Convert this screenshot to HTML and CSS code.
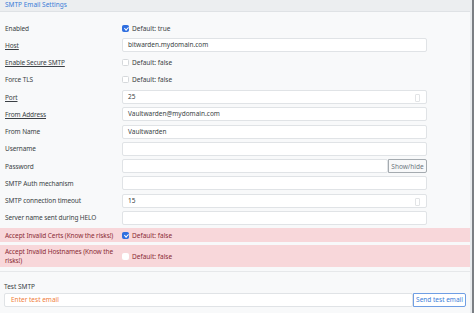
FILE: index.html
```html
<!DOCTYPE html>
<html lang="en">

<head>
    <meta charset="UTF-8">
    <meta name="viewport" content="width=device-width, initial-scale=1.0">
    <title>Vaultwarden Admin</title>
    <link rel="stylesheet" href="styles.css">
</head>

<body>
    <div class="card">
        <div class="card-header">SMTP Email Settings</div>

        <div class="card-body">
            <div class="row">
                <label class="col-label">Enabled</label>
                <div class="col-field check">
                    <span class="box checked"></span><span>Default: true</span>
                </div>
            </div>
            <div class="row">
                <label class="col-label"><abbr>Host</abbr></label>
                <div class="col-field"><div class="input">bitwarden.mydomain.com</div></div>
            </div>
            <div class="row">
                <label class="col-label"><abbr>Enable Secure SMTP</abbr></label>
                <div class="col-field check">
                    <span class="box"></span><span>Default: false</span>
                </div>
            </div>
            <div class="row">
                <label class="col-label">Force TLS</label>
                <div class="col-field check">
                    <span class="box"></span><span>Default: false</span>
                </div>
            </div>
            <div class="row">
                <label class="col-label"><abbr>Port</abbr></label>
                <div class="col-field"><div class="input number">25<span class="spin"></span></div></div>
            </div>
            <div class="row">
                <label class="col-label"><abbr>From Address</abbr></label>
                <div class="col-field"><div class="input">Vaultwarden@mydomain.com</div></div>
            </div>
            <div class="row">
                <label class="col-label">From Name</label>
                <div class="col-field"><div class="input">Vaultwarden</div></div>
            </div>
            <div class="row">
                <label class="col-label">Username</label>
                <div class="col-field"><div class="input"></div></div>
            </div>
            <div class="row">
                <label class="col-label">Password</label>
                <div class="col-field group">
                    <div class="input"></div>
                    <button class="btn-grey">Show/hide</button>
                </div>
            </div>
            <div class="row">
                <label class="col-label">SMTP Auth mechanism</label>
                <div class="col-field"><div class="input"></div></div>
            </div>
            <div class="row">
                <label class="col-label">SMTP connection timeout</label>
                <div class="col-field"><div class="input number">15<span class="spin"></span></div></div>
            </div>
            <div class="row">
                <label class="col-label">Server name sent during HELO</label>
                <div class="col-field"><div class="input"></div></div>
            </div>
            <div class="row danger">
                <label class="col-label">Accept Invalid Certs (Know the risks!)</label>
                <div class="col-field check">
                    <span class="box checked"></span><span>Default: false</span>
                </div>
            </div>
            <div class="row danger tall">
                <label class="col-label">Accept Invalid Hostnames (Know the risks!)</label>
                <div class="col-field check">
                    <span class="box plain"></span><span>Default: false</span>
                </div>
            </div>
        </div>

        <div class="card-footer">
            <div class="test-label">Test SMTP</div>
            <div class="group">
                <div class="input placeholder">Enter test email</div>
                <button class="btn-blue">Send test email</button>
            </div>
        </div>
    </div>
</body>

</html>
```

FILE: styles.css
```css
html, body {
    height: 100%;
}

body {
    margin: 0;
    padding: 0;
    background-color: #fff;
    color: #3a3f44;
    font-family: "Noto Sans", "Open Sans", sans-serif;
    font-size: 6.5px;
    overflow: hidden;
}

.card {
    width: 470px;
    height: 313px;
    background-color: #f8f9fa;
    border-right: 2px solid #e9ecef;
    box-shadow: 2px 0 0 #7b7f84;
}

.card-header {
    height: 11px;
    line-height: 9px;
    padding-left: 5px;
    background-color: #eceef0;
    border-bottom: 1px solid #dfe2e5;
    color: #3b7dd8;
}

.card-body {
    padding-top: 9px;
}

.row {
    display: flex;
    align-items: center;
    min-height: 14px;
    margin-bottom: 3.25px;
    padding-left: 5px;
}

.col-label {
    width: 110px;
    margin-right: 7px;
    flex-shrink: 0;
    letter-spacing: -0.1px;
    line-height: 9px;
}

abbr {
    text-decoration: underline;
    text-underline-offset: 1px;
}

.col-field {
    width: 305px;
}

.check {
    display: flex;
    align-items: center;
    gap: 3px;
}

.box {
    width: 7px;
    height: 7px;
    box-sizing: border-box;
    border: 1px solid #d5d8db;
    border-radius: 1.5px;
    background-color: #fff;
}

.box.checked {
    border-color: #2f6fe0;
    background-color: #2f6fe0;
    position: relative;
}

.box.checked::after {
    content: "";
    position: absolute;
    left: 1.5px;
    top: 0.3px;
    width: 1.5px;
    height: 3px;
    border: solid #fff;
    border-width: 0 1px 1px 0;
    transform: rotate(45deg);
}

.box.plain {
    border-color: #fff;
}

.input {
    height: 14px;
    box-sizing: border-box;
    line-height: 12px;
    padding-left: 5px;
    background-color: #fff;
    border: 1px solid #e0e3e6;
    border-radius: 2px;
    position: relative;
}

.spin {
    position: absolute;
    right: 6px;
    top: 3px;
    width: 3px;
    height: 6px;
    border: 1px solid #e2e4e6;
    border-radius: 1px;
    background: linear-gradient(#fff 45%, #c9ccd0 45%, #c9ccd0 55%, #fff 55%);
}

.group {
    display: flex;
}

.group .input {
    flex: 1;
}

.btn-grey {
    height: 14px;
    width: 39px;
    padding: 0;
    font: inherit;
    color: #6c757d;
    background-color: #f8f9fa;
    border: 1px solid #a5abb0;
    border-radius: 0 2px 2px 0;
}

.danger {
    background-color: #f8d7da;
    color: #8a2c35;
}

.tall {
    min-height: 22px;
}

.card-footer {
    border-top: 1px solid #e6e8ea;
    margin-top: 0.5px;
    padding: 10px 4px 0;
}

.test-label {
    line-height: 9px;
    margin-bottom: 2px;
}

.placeholder {
    color: #f0803c;
    padding-left: 6px;
}

.btn-blue {
    height: 14px;
    width: 53px;
    padding: 0;
    font: inherit;
    color: #3b7dd8;
    background-color: #fff;
    border: 1px solid #6f9ee4;
    border-radius: 0 2px 2px 0;
}
```
